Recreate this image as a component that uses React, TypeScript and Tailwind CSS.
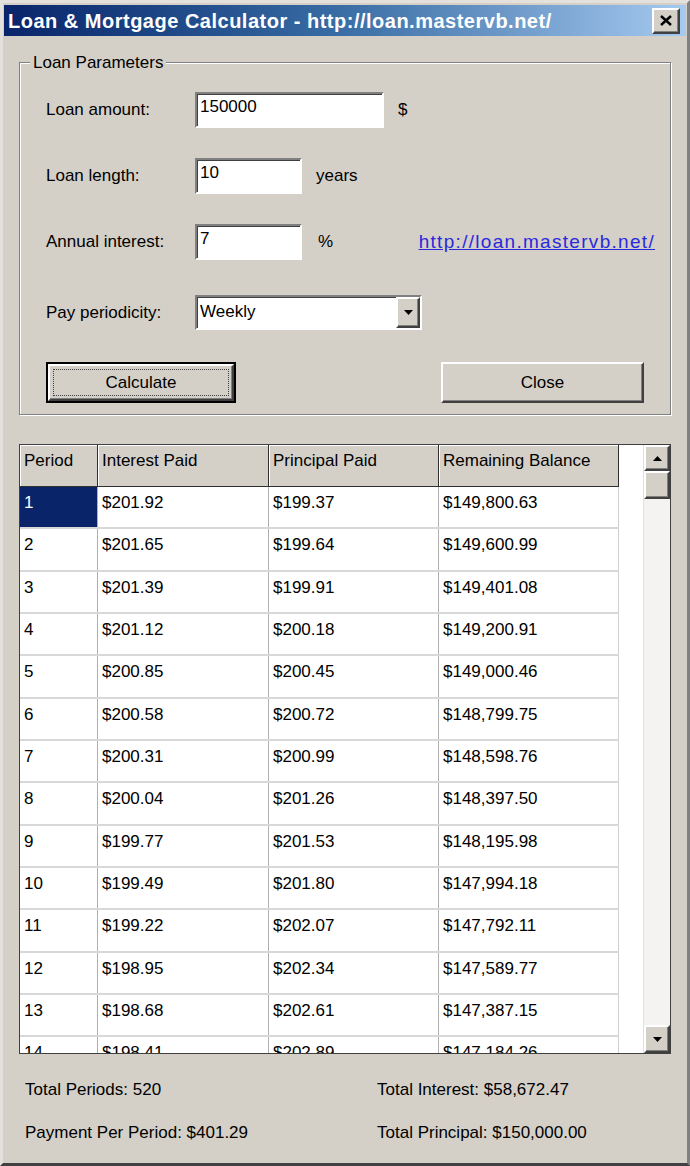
import React from "react";

const rows: [string, string, string, string][] = [
  ["1", "$201.92", "$199.37", "$149,800.63"],
  ["2", "$201.65", "$199.64", "$149,600.99"],
  ["3", "$201.39", "$199.91", "$149,401.08"],
  ["4", "$201.12", "$200.18", "$149,200.91"],
  ["5", "$200.85", "$200.45", "$149,000.46"],
  ["6", "$200.58", "$200.72", "$148,799.75"],
  ["7", "$200.31", "$200.99", "$148,598.76"],
  ["8", "$200.04", "$201.26", "$148,397.50"],
  ["9", "$199.77", "$201.53", "$148,195.98"],
  ["10", "$199.49", "$201.80", "$147,994.18"],
  ["11", "$199.22", "$202.07", "$147,792.11"],
  ["12", "$198.95", "$202.34", "$147,589.77"],
  ["13", "$198.68", "$202.61", "$147,387.15"],
  ["14", "$198.41", "$202.89", "$147,184.26"],
];

const sunken =
  "border-2 border-t-[#808080] border-l-[#808080] border-b-white border-r-white shadow-[inset_1px_1px_0_#404040] bg-white";
const raised =
  "border-2 border-t-white border-l-white border-b-[#404040] border-r-[#404040] shadow-[inset_-1px_-1px_0_#808080] bg-[#d4d0c8]";

function Label({ children }: { children: React.ReactNode }) {
  return <div className="w-[149px] shrink-0 text-[17px] leading-[20px]">{children}</div>;
}

export default function App() {
  return (
    <div className="w-[690px] h-[1166px] bg-[#d4d0c8] font-['Liberation_Sans',Arial,sans-serif] text-black border-t-[3px] border-l-[3px] border-t-[#e4e1dc] border-l-[#e4e1dc] border-r-[3px] border-b-[3px] border-r-[#808080] border-b-[#404040] pt-[2px] px-[1px] flex flex-col overflow-hidden">
      {/* Title bar */}
      <div className="h-[31px] shrink-0 bg-gradient-to-r from-[#0a246a] via-[#3a6ea5] to-[#a6caf0] flex items-center justify-between pl-[4px] pr-[6px]">
        <span className="text-white font-bold text-[20px] leading-[22px] tracking-[0.5px] whitespace-nowrap">
          Loan &amp; Mortgage Calculator - http://loan.mastervb.net/
        </span>
        <div className={`${raised} w-[28px] h-[26px] flex items-center justify-center`}>
          <svg width="12" height="11" viewBox="0 0 12 11">
            <path d="M1 1 L11 10 M11 1 L1 10" stroke="#000" strokeWidth="2.4" />
          </svg>
        </div>
      </div>

      {/* Body */}
      <div className="flex-1 px-[15px] pt-[26px] flex flex-col">
        {/* Group box */}
        <div className="relative h-[353px] border border-[#808080] shadow-[inset_1px_1px_0_#fff,1px_1px_0_#fff] pl-[26px] pr-[15px] pt-[29px] flex flex-col">
          <span className="absolute -top-[10px] left-[10px] bg-[#d4d0c8] px-[3px] text-[17px] leading-[20px]">
            Loan Parameters
          </span>

          <div className="flex items-center h-[36px]">
            <Label>Loan amount:</Label>
            <div className={`${sunken} w-[189px] h-[36px] pl-[3px] pt-[3px] text-[17px] leading-[20px]`}>150000</div>
            <span className="ml-[14px] text-[17px]">$</span>
          </div>

          <div className="flex items-center h-[36px] mt-[30px]">
            <Label>Loan length:</Label>
            <div className={`${sunken} w-[107px] h-[36px] pl-[3px] pt-[3px] text-[17px] leading-[20px]`}>10</div>
            <span className="ml-[14px] text-[17px]">years</span>
          </div>

          <div className="flex items-center h-[36px] mt-[30px]">
            <Label>Annual interest:</Label>
            <div className={`${sunken} w-[107px] h-[36px] pl-[3px] pt-[3px] text-[17px] leading-[20px]`}>7</div>
            <span className="ml-[16px] text-[17px]">%</span>
            <span className="ml-auto text-[19px] tracking-[1.3px] text-[#2a2adc] underline whitespace-nowrap">
              http://loan.mastervb.net/
            </span>
          </div>

          <div className="flex items-center h-[35px] mt-[35px]">
            <Label>Pay periodicity:</Label>
            <div className={`${sunken} w-[227px] h-[35px] flex items-stretch`}>
              <div className="flex-1 pl-[3px] pt-[5px] text-[17px] leading-[20px]">Weekly</div>
              <div className={`${raised} w-[24px] flex items-center justify-center`}>
                <svg width="9" height="5" viewBox="0 0 9 5">
                  <path d="M0 0 H9 L4.5 5 Z" fill="#000" />
                </svg>
              </div>
            </div>
          </div>

          <div className="flex items-center justify-between mt-[32px] pr-[11px]">
            <div className="w-[190px] h-[41px] border-2 border-black">
              <div className={`${raised} w-full h-full p-[3px]`}>
                <div className="w-full h-full border border-dotted border-[#404040] flex items-center justify-center text-[17px]">
                  Calculate
                </div>
              </div>
            </div>
            <div className={`${raised} w-[203px] h-[41px] flex items-center justify-center text-[17px]`}>Close</div>
          </div>
        </div>

        {/* Table */}
        <div className="mt-[29px] h-[610px] border border-[#404040] bg-white flex overflow-hidden">
          <div className="w-[599px] shrink-0 flex flex-col overflow-hidden">
            <div className="flex h-[42px] shrink-0 bg-[#d4d0c8] border-b border-[#303030] text-[17px] leading-[20px]">
              <div className="w-[78px] border-r border-[#303030] pl-[4px] pt-[6px] shadow-[inset_1px_1px_0_#fff]">Period</div>
              <div className="w-[171px] border-r border-[#303030] pl-[4px] pt-[6px] shadow-[inset_1px_1px_0_#fff]">Interest Paid</div>
              <div className="w-[170px] border-r border-[#303030] pl-[4px] pt-[6px] shadow-[inset_1px_1px_0_#fff]">Principal Paid</div>
              <div className="w-[180px] border-r border-[#303030] pl-[4px] pt-[6px] shadow-[inset_1px_1px_0_#fff]">Remaining Balance</div>
            </div>
            <div className="flex-1 overflow-hidden">
              {rows.map((r, i) => (
                <div key={i} className="flex h-[42.33px] border-b-2 border-[#d8d8d8] text-[17px] leading-[20px]">
                  <div
                    className={`w-[78px] shrink-0 border-r border-[#b0b0b0] pl-[4px] pt-[6px] ${
                      i === 0 ? "bg-[#0a246a] text-white" : ""
                    }`}
                  >
                    {r[0]}
                  </div>
                  <div className="w-[171px] shrink-0 border-r border-[#b0b0b0] pl-[4px] pt-[6px]">{r[1]}</div>
                  <div className="w-[170px] shrink-0 border-r border-[#b0b0b0] pl-[4px] pt-[6px]">{r[2]}</div>
                  <div className="w-[180px] shrink-0 border-r border-[#d0d0d0] pl-[4px] pt-[6px]">{r[3]}</div>
                </div>
              ))}
            </div>
          </div>
          <div className="flex-1" />
          {/* Scrollbar */}
          <div className="w-[27px] shrink-0 flex flex-col bg-[#f4f3f1] border-l border-[#e0e0e0]">
            <div className={`${raised} h-[26px] shrink-0 flex items-center justify-center`}>
              <svg width="9" height="5" viewBox="0 0 9 5">
                <path d="M0 5 H9 L4.5 0 Z" fill="#000" />
              </svg>
            </div>
            <div className={`${raised} h-[28px] shrink-0`} />
            <div className="flex-1" />
            <div className={`${raised} h-[28px] shrink-0 flex items-center justify-center`}>
              <svg width="9" height="5" viewBox="0 0 9 5">
                <path d="M0 0 H9 L4.5 5 Z" fill="#000" />
              </svg>
            </div>
          </div>
        </div>

        {/* Footer */}
        <div className="grid grid-cols-[352px_1fr] pl-[6px] mt-[26px] gap-y-[23px] text-[17px] leading-[20px]">
          <div>Total Periods: 520</div>
          <div>Total Interest: $58,672.47</div>
          <div>Payment Per Period: $401.29</div>
          <div>Total Principal: $150,000.00</div>
        </div>
      </div>
    </div>
  );
}
